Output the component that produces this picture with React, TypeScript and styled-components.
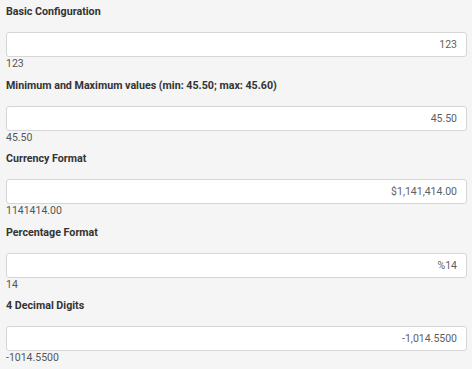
import styled, { createGlobalStyle } from "styled-components";

const GlobalStyle = createGlobalStyle`
  html, body {
    margin: 0;
    padding: 0;
    background: #ffffff;
  }
  body {
    font-family: Roboto, "Liberation Sans", Arial, sans-serif;
  }
`;

const Panel = styled.div`
  width: 472px;
  height: 369px;
  background: #f5f5f5;
  box-sizing: border-box;
  padding: 4px 5px 0 6px;
  overflow: hidden;
`;

const Field = styled.div`
  display: flex;
  flex-direction: column;
  height: 73.6px;
`;

const Label = styled.div`
  font-size: 10.7px;
  font-weight: 700;
  color: #333333;
  line-height: 16px;
  margin-bottom: 12px;
`;

const Input = styled.input`
  box-sizing: border-box;
  width: 100%;
  height: 25px;
  margin: 0;
  padding: 0 9px;
  border: 1px solid #d6d6d6;
  border-radius: 3px;
  background: #ffffff;
  font-family: inherit;
  font-size: 10.5px;
  color: #5f5f5f;
  text-align: right;
  outline: none;
`;

const Raw = styled.div`
  font-size: 10.5px;
  color: #555555;
  line-height: 14px;
`;

const fields = [
  { label: "Basic Configuration", shown: "123", raw: "123" },
  {
    label: "Minimum and Maximum values (min: 45.50; max: 45.60)",
    shown: "45.50",
    raw: "45.50",
  },
  { label: "Currency Format", shown: "$1,141,414.00", raw: "1141414.00" },
  { label: "Percentage Format", shown: "%14", raw: "14" },
  { label: "4 Decimal Digits", shown: "-1,014.5500", raw: "-1014.5500" },
];

export default function App() {
  return (
    <>
      <GlobalStyle />
      <Panel>
        {fields.map((f) => (
          <Field key={f.label}>
            <Label>{f.label}</Label>
            <Input defaultValue={f.shown} readOnly />
            <Raw>{f.raw}</Raw>
          </Field>
        ))}
      </Panel>
    </>
  );
}
